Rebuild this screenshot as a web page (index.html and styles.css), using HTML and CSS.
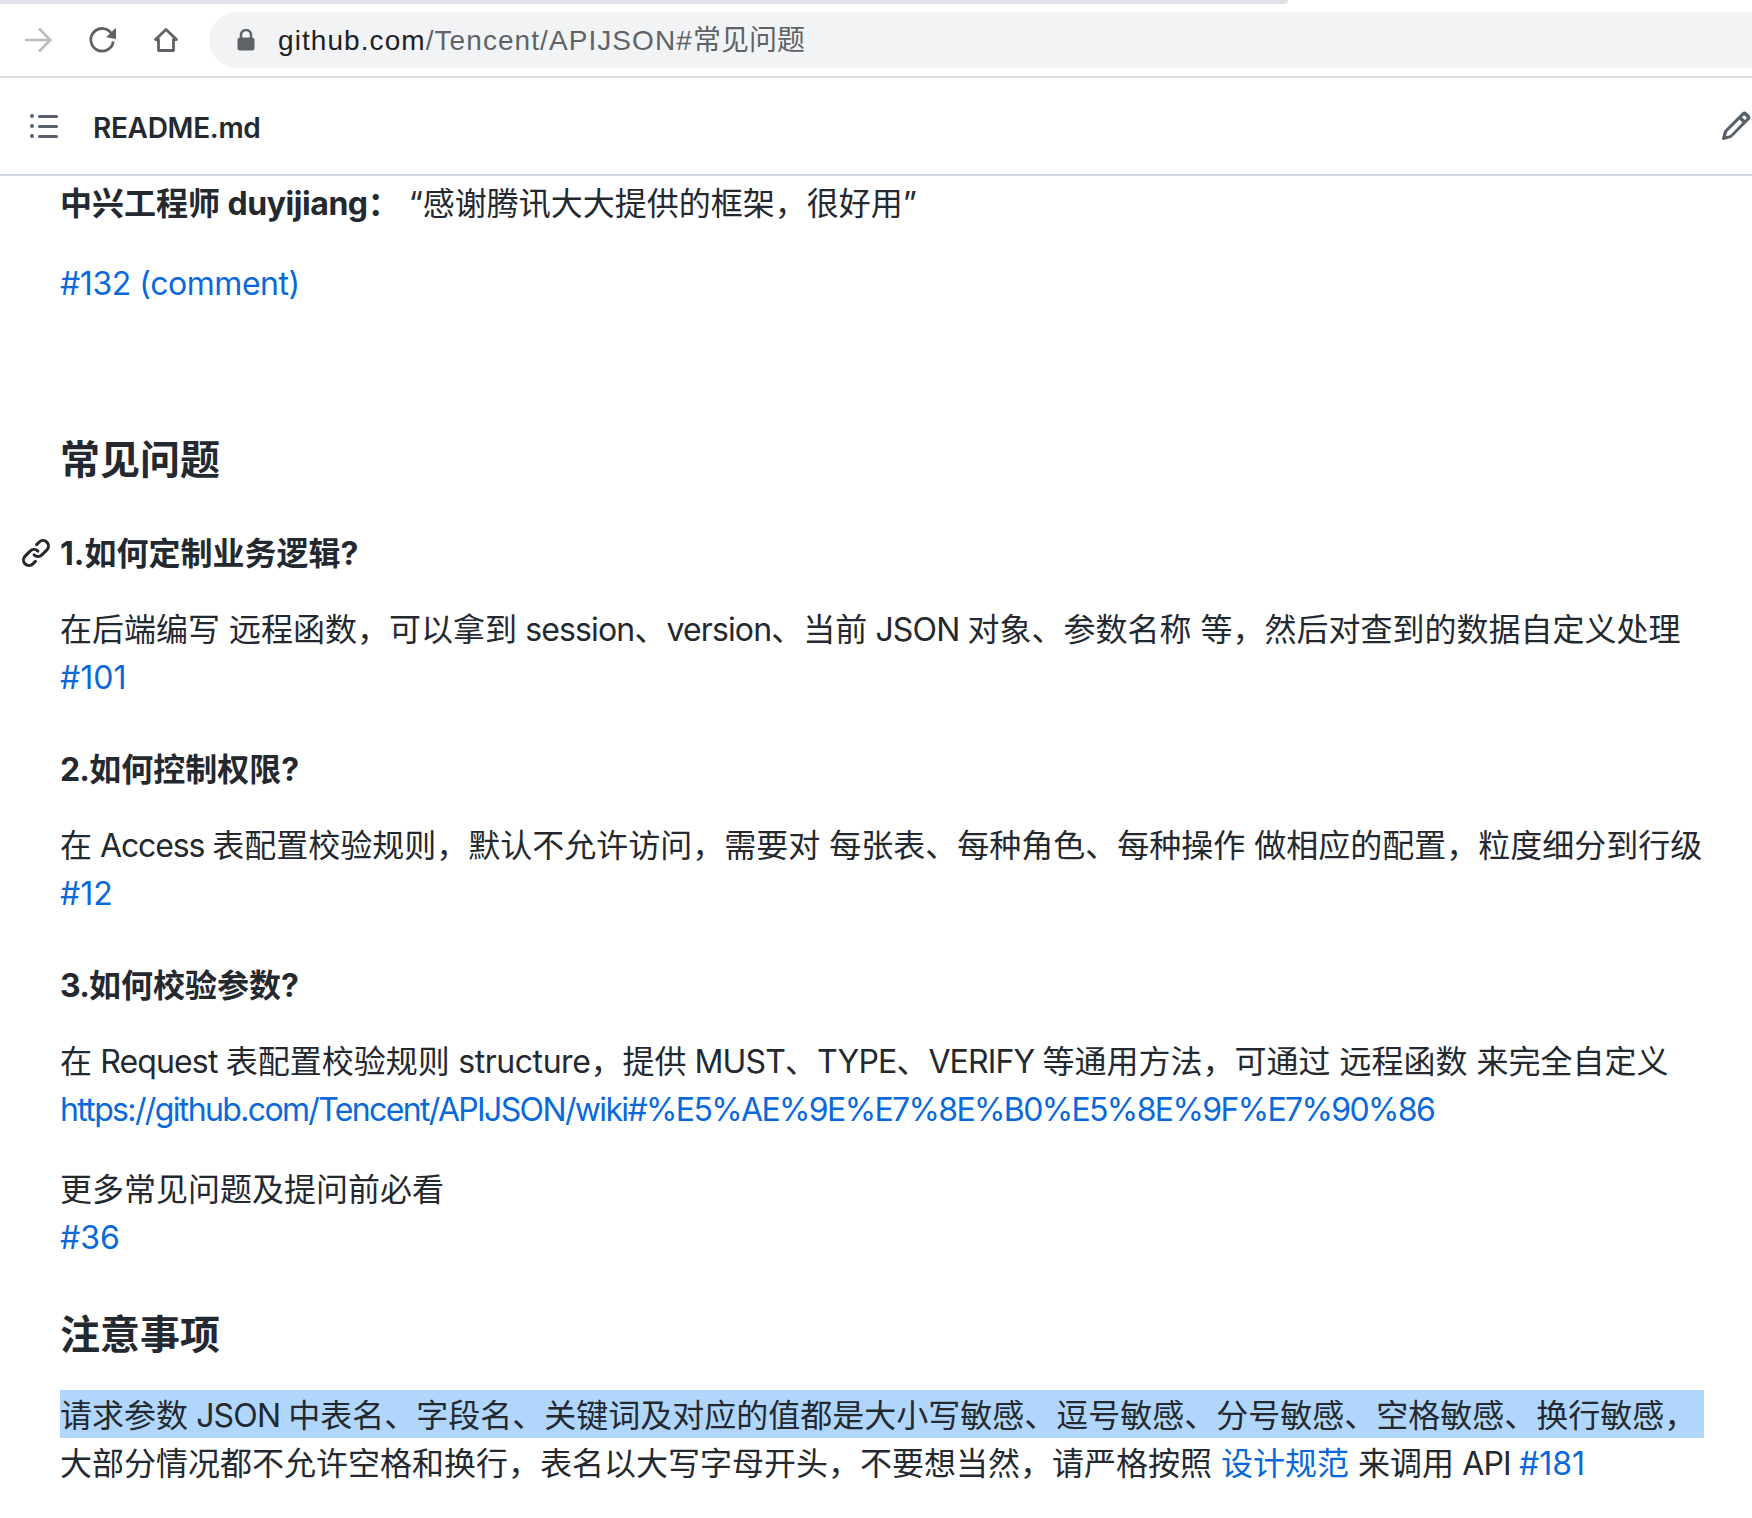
FILE: index.html
```html
<!DOCTYPE html>
<html lang="zh-CN">
<head>
<meta charset="utf-8">
<title>README.md</title>
<link rel="stylesheet" href="styles.css">
</head>
<body>
<div class="tab-strip"></div>
<header class="toolbar">
  <svg class="tb-icon arrow" width="28" height="28" viewBox="0 0 28 28"><path d="M1 14h25M15 2.500l11.500 11.500-11.500 11.500" fill="none" stroke="#bdbdbd" stroke-width="2.600"/></svg>
  <svg class="tb-icon reload" width="28" height="28" viewBox="0 0 28 28"><path d="M23.500 7.500A11.300 11.300 0 1 0 25.300 15.500" fill="none" stroke="#5f6368" stroke-width="2.800"/><path d="M28 1.700V13L18 11.300z" fill="#5f6368"/></svg>
  <svg class="tb-icon home" width="28" height="28" viewBox="0 0 28 28"><path d="M14 3.500 3.500 13.500H6.500V24.500H21.500V13.500H24.500Z" fill="none" stroke="#5f6368" stroke-width="2.800" stroke-linejoin="round"/></svg>
  <div class="omnibox">
    <svg class="lock" width="18" height="22" viewBox="0 0 18 22"><path d="M4 9V6a5 5 0 0 1 10 0v3" fill="none" stroke="#5f6368" stroke-width="2.400"/><rect x="0.500" y="8.500" width="17" height="13" rx="2.500" fill="#5f6368"/></svg>
    <span class="url"><span class="host">github.com</span><span class="path">/Tencent/APIJSON#</span>常见问题</span>
  </div>
</header>
<div class="file-bar">
  <svg class="oct" viewBox="0 0 16 16"><path d="M5.750 2.500h8.500a.75.75 0 0 1 0 1.500h-8.500a.75.75 0 0 1 0-1.500Zm0 5h8.500a.75.75 0 0 1 0 1.500h-8.500a.75.75 0 0 1 0-1.500Zm0 5h8.500a.75.75 0 0 1 0 1.500h-8.500a.75.75 0 0 1 0-1.500ZM2 14a1 1 0 1 1 0-2 1 1 0 0 1 0 2Zm1-6a1 1 0 1 1-2 0 1 1 0 0 1 2 0ZM2 4a1 1 0 1 1 0-2 1 1 0 0 1 0 2Z"/></svg>
  <span class="file-name">README.md</span>
  <svg class="oct pencil" viewBox="0 0 16 16"><path d="M11.013 1.427a1.750 1.750 0 0 1 2.474 0l1.086 1.086a1.750 1.750 0 0 1 0 2.474l-8.610 8.610c-.21.21-.47.364-.756.445l-3.251.93a.75.75 0 0 1-.927-.928l.929-3.250c.081-.286.235-.547.445-.758l8.610-8.610Zm.176 4.823L9.750 4.810l-6 6a.749.749 0 0 0-.19.324l-.58 2.030 2.030-.58a.749.749 0 0 0 .324-.19Zm1.238-1.237.884-.884a.25.25 0 0 0 0-.354l-1.086-1.086a.25.25 0 0 0-.354 0l-.884.884Z"/></svg>
</div>
<main class="readme">
  <p><strong>中兴工程师 <span class="tight">duyijiang</span>：</strong> “感谢腾讯大大提供的框架，很好用”</p>
  <p><a href="#" class="tight">#132 (comment)</a></p>
  <h2 class="first-h2">常见问题</h2>
  <h3 class="anchored">
    <svg class="oct link-icon" viewBox="0 0 16 16"><path d="m7.775 3.275 1.250-1.250a3.500 3.500 0 1 1 4.950 4.950l-2.500 2.500a3.500 3.500 0 0 1-4.950 0 .751.751 0 0 1 .018-1.042.751.751 0 0 1 1.042-.018 1.998 1.998 0 0 0 2.830 0l2.500-2.500a2.002 2.002 0 0 0-2.830-2.830l-1.250 1.250a.751.751 0 0 1-1.042-.018.751.751 0 0 1-.018-1.042Zm-4.690 9.640a1.998 1.998 0 0 0 2.830 0l1.250-1.250a.751.751 0 0 1 1.042.018.751.751 0 0 1 .018 1.042l-1.250 1.250a3.500 3.500 0 1 1-4.950-4.950l2.500-2.500a3.500 3.500 0 0 1 4.950 0 .751.751 0 0 1-.018 1.042.751.751 0 0 1-1.042.018 1.998 1.998 0 0 0-2.830 0l-2.500 2.500a1.998 1.998 0 0 0 0 2.830Z"/></svg>1.如何定制业务逻辑<span class="lat">?</span></h3>
  <p>在后端编写 远程函数，可以拿到<span class="lat"> session</span>、<span class="lat">version</span>、当前<span class="lat"> JSON </span>对象、参数名称 等，然后对查到的数据自定义处理<br><a href="#">#101</a></p>
  <h3><span class="lat">2.</span>如何控制权限<span class="lat">?</span></h3>
  <p>在<span class="caps-tight"> Access </span>表配置校验规则，默认不允许访问，需要对 每张表、每种角色、每种操作 做相应的配置，粒度细分到行级<br><a href="#">#12</a></p>
  <h3><span class="lat">3.</span>如何校验参数<span class="lat">?</span></h3>
  <p>在<span class="lat"> Request </span>表配置校验规则<span class="tight"> structure</span>，提供<span class="lat"> MUST</span>、<span class="lat">TYPE</span>、<span class="lat">VERIFY </span>等通用方法，可通过 远程函数 来完全自定义<br><a href="#" class="url-link">https://github.com/Tencent/APIJSON/wiki#%E5%AE%9E%E7%8E%B0%E5%8E%9F%E7%90%86</a></p>
  <p>更多常见问题及提问前必看<br><a href="#">#36</a></p>
  <h2 class="notes-h2">注意事项</h2>
  <p><span class="selected">请求参数<span class="lat"> JSON </span>中表名、字段名、关键词及对应的值都是大小写敏感、逗号敏感、分号敏感、空格敏感、换行敏感，</span>大部分情况都不允许空格和换行，表名以大写字母开头，不要想当然，请严格按照 <a href="#">设计规范</a> 来调用<span class="lat"> API </span><a href="#">#181</a></p>
</main>
</body>
</html>
```
FILE: styles.css
```css
* { box-sizing: border-box; }
html, body { margin: 0; height: 100%; }
body {
  background: #fff;
  color: #24292f;
  font-family: Inter, "Noto Sans CJK SC", sans-serif;
  overflow: hidden;
}
.tab-strip {
  width: 1288px;
  height: 4px;
  background: #dee1e6;
  border-bottom-right-radius: 4px;
}
.toolbar {
  display: flex;
  align-items: center;
  height: 74px;
  padding: 8px 0 8px 24px;
  border-bottom: 2px solid #dcdddf;
}
.tb-icon { flex: none; }
.arrow { margin-right: 36px; }
.reload { margin-right: 36px; }
.home { margin-right: 29px; }
.omnibox {
  flex: 1;
  height: 56px;
  display: flex;
  align-items: center;
  padding-left: 28px;
  background: #f1f3f4;
  border-radius: 28px 0 0 28px;
}
.lock { margin-right: 23px; }
.url {
  margin-bottom: 5px;
  font-family: "Liberation Sans", "Noto Sans CJK SC", sans-serif;
  font-size: 28px;
  color: #5f6368;
  white-space: nowrap;
}
.host, .path { letter-spacing: 1.07px; }
.host { color: #202124; }
.file-bar {
  display: flex;
  align-items: center;
  height: 98px;
  padding-left: 28px;
  border-bottom: 2px solid #d0d7de;
}
.oct { width: 32px; height: 32px; flex: none; fill: #57606a; }
.file-name {
  flex: 1;
  margin: 4px 0 0 33px;
  font-size: 28px;
  font-weight: 600;
  letter-spacing: -0.3px;
  color: #24292f;
}
.readme { padding: 4px 48px 0 60px; }
p {
  margin: 0 0 32px;
  font-size: 32px;
  line-height: 48px;
  white-space: nowrap;
}
strong { font-weight: 700; }
a { color: #0969da; text-decoration: none; }
.lat { letter-spacing: -0.85px; }
.tight { letter-spacing: -0.45px; }
.caps-tight { letter-spacing: -1.1px; }
.url-link { letter-spacing: -1.64px; }
h2 {
  margin: 48px 0 32px;
  font-size: 40px;
  line-height: 50px;
  font-weight: 700;
}
.first-h2 { margin-top: 127px; margin-bottom: 49px; }
.notes-h2 { margin-bottom: 30px; }
h3 {
  margin: 48px 0 32px;
  font-size: 32px;
  line-height: 40px;
  font-weight: 700;
  position: relative;
}
.anchored { margin-top: 0; }
.link-icon {
  position: absolute;
  left: -40px;
  top: 3px;
  fill: #24292f;
}
.selected {
  display: block;
  margin-bottom: 2px;
  padding-top: 4px;
  line-height: 44px;
  background: #b0d6fb;
}
```
